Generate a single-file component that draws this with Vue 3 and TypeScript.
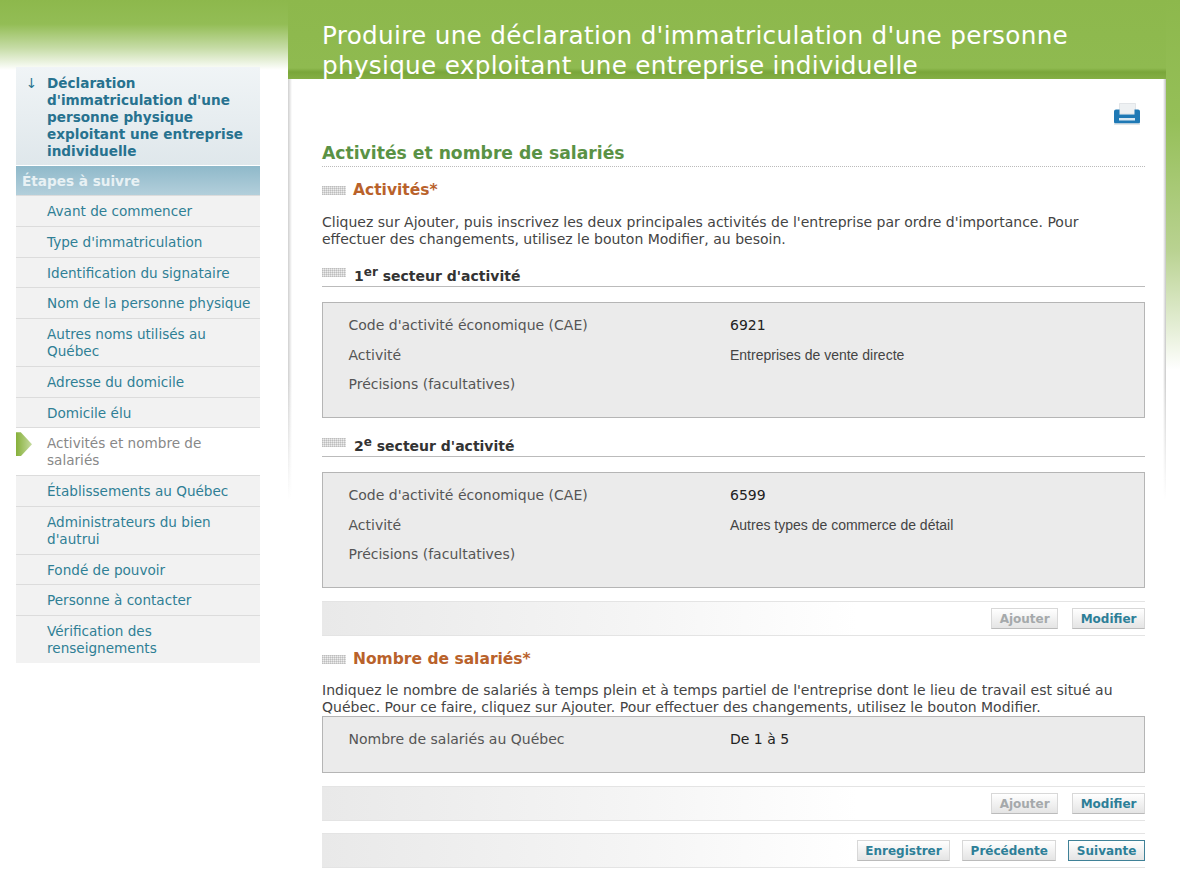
<script setup lang="ts">
interface Step { label: string; current?: boolean }
const steps: Step[] = [
  { label: "Avant de commencer" },
  { label: "Type d'immatriculation" },
  { label: "Identification du signataire" },
  { label: "Nom de la personne physique" },
  { label: "Autres noms utilisés au Québec" },
  { label: "Adresse du domicile" },
  { label: "Domicile élu" },
  { label: "Activités et nombre de salariés", current: true },
  { label: "Établissements au Québec" },
  { label: "Administrateurs du bien d'autrui" },
  { label: "Fondé de pouvoir" },
  { label: "Personne à contacter" },
  { label: "Vérification des renseignements" },
]
</script>

<template>
  <div class="page">
    <aside class="side">
      <nav class="nav">
        <div class="nav-top">
          <span class="arrow">↓</span>
          <span class="nav-title">Déclaration d'immatriculation d'une personne physique exploitant une entreprise individuelle</span>
        </div>
        <div class="nav-head">Étapes à suivre</div>
        <ul class="steps">
          <li v-for="s in steps" :key="s.label" class="step" :class="{ current: s.current }">
            <span v-if="s.current" class="marker"></span>
            {{ s.label }}
          </li>
        </ul>
      </nav>
    </aside>

    <div class="main">
      <header class="banner">
        <h1>Produire une déclaration d'immatriculation d'une personne physique exploitant une entreprise individuelle</h1>
      </header>
      <main class="panel">
        <div class="print-row">
          <svg class="printer" width="28" height="22" viewBox="0 0 28 22">
            <path d="M6.500 0.500 H22.500 V11 H6.500z" fill="#eef1f3" stroke="#d4d9dc" stroke-width="0.6" />
            <path d="M3 6.500 H6.500 V11.500 H21.500 V6.500 H25 a2 2 0 0 1 2 2 V19 a1.500 1.500 0 0 1-1.500 1.500 H2.500 A1.500 1.500 0 0 1 1 19 V8.500 a2 2 0 0 1 2-2z" fill="#1f79b5" />
            <rect x="6" y="15" width="16" height="2.500" fill="#d9e8f2" />
            <rect x="1" y="20.500" width="26" height="1.200" fill="#d5dcdf" />
          </svg>
        </div>
        <h2 class="page-title">Activités et nombre de salariés</h2>

        <h3 class="sec"><span class="dots"></span>Activités*</h3>
        <p class="intro first">Cliquez sur Ajouter, puis inscrivez les deux principales activités de l'entreprise par ordre d'importance. Pour effectuer des changements, utilisez le bouton Modifier, au besoin.</p>

        <h4 class="sub"><span class="dots"></span><span>1<sup>er</sup> secteur d'activité</span></h4>
        <div class="box tall">
          <div class="row"><span class="lbl">Code d'activité économique (CAE)</span><span class="val">6921</span></div>
          <div class="row"><span class="lbl">Activité</span><span class="val small">Entreprises de vente directe</span></div>
          <div class="row"><span class="lbl">Précisions (facultatives)</span></div>
        </div>

        <h4 class="sub"><span class="dots"></span><span>2<sup>e</sup> secteur d'activité</span></h4>
        <div class="box tall">
          <div class="row"><span class="lbl">Code d'activité économique (CAE)</span><span class="val">6599</span></div>
          <div class="row"><span class="lbl">Activité</span><span class="val small">Autres types de commerce de détail</span></div>
          <div class="row"><span class="lbl">Précisions (facultatives)</span></div>
        </div>

        <div class="bar">
          <button class="btn off">Ajouter</button>
          <button class="btn">Modifier</button>
        </div>

        <h3 class="sec count"><span class="dots"></span>Nombre de salariés*</h3>
        <p class="intro">Indiquez le nombre de salariés à temps plein et à temps partiel de l'entreprise dont le lieu de travail est situé au Québec. Pour ce faire, cliquez sur Ajouter. Pour effectuer des changements, utilisez le bouton Modifier.</p>
        <div class="box short">
          <div class="row"><span class="lbl">Nombre de salariés au Québec</span><span class="val">De 1 à 5</span></div>
        </div>

        <div class="bar">
          <button class="btn off">Ajouter</button>
          <button class="btn">Modifier</button>
        </div>
        <div class="bar third-bar">
          <button class="btn">Enregistrer</button>
          <button class="btn">Précédente</button>
          <button class="btn next">Suivante</button>
        </div>
      </main>
    </div>
  </div>
</template>

<style>
html, body { margin: 0; background: #fff; }
</style>

<style scoped>
.page {
  display: flex;
  height: 877px;
  overflow: hidden;
  font-family: "DejaVu Sans", Verdana, sans-serif;
  font-size: 14px;
  line-height: 17px;
  color: #444;
  background: linear-gradient(180deg, #8db84c 0, #93bd55 24px, #c6dca6 48px, #fff 70px, #fff 100%);
}
.side { width: 288px; flex: none; padding: 67px 0 0 16px; box-sizing: border-box; }
.nav { width: 244px; font-size: 13.6px; }
.nav-top {
  display: flex;
  height: 98px;
  box-sizing: border-box;
  padding-top: 8px;
  background: linear-gradient(180deg, #f0f4f6, #dfe7eb);
  color: #27728f;
  font-weight: 700;
}
.arrow { width: 31px; flex: none; text-align: center; font-weight: 400; }
.nav-title { flex: 1; }
.nav-head {
  height: 29px;
  margin-top: 1px;
  padding-left: 6px;
  line-height: 30px;
  font-weight: 700;
  color: #e8f1f4;
  background: linear-gradient(180deg, #8fb9ca, #b3cfdb);
}
.steps { list-style: none; margin: 0; padding: 0; }
.step {
  position: relative;
  padding: 7px 6px 5.75px 31px;
  background: #f2f2f2;
  color: #2f7f95;
  border-top: 1px solid #dcdcdc;
}
.step.current { background: #fff; color: #888; }
.marker {
  position: absolute;
  left: 0;
  top: 4px;
  width: 16px;
  height: 24px;
  background: linear-gradient(90deg, #86b03a, #c6dba0);
  clip-path: polygon(0 0, 30% 0, 100% 50%, 30% 100%, 0 100%);
}
.main {
  width: 892px;
  flex: none;
  padding-right: 14px;
  box-sizing: border-box;
  background: linear-gradient(180deg, #8db84c 0, #95bf58 120px, #b9d291 250px, #e6efd8 330px, #fff 370px);
}
.banner {
  height: 79px;
  box-sizing: border-box;
  padding: 21px 20px 0 34px;
  background: linear-gradient(180deg, #8db84c 0, #8fba50 68px, #7aa63a 72px, #84af44 79px);
  overflow: hidden;
}
h1 {
  margin: 0;
  font-size: 24.7px;
  line-height: 30px;
  font-weight: 400;
  color: #fff;
  letter-spacing: 0.3px;
}
.panel {
  height: 798px;
  padding: 0 21px 0 34px;
  box-sizing: border-box;
  background:
    linear-gradient(90deg, rgba(255, 255, 255, 0), #fff) left top / 4px 421px no-repeat,
    linear-gradient(180deg, #cfcfcf, #cfcfcf 300px, #fff) left top / 4px 421px no-repeat,
    linear-gradient(90deg, #fff, rgba(255, 255, 255, 0)) right top / 3px 421px no-repeat,
    linear-gradient(180deg, #bdbdbd, #c8c8c8 300px, #fff) right top / 3px 421px no-repeat,
    #fff;
}
.print-row { display: flex; justify-content: flex-end; height: 61px; padding-top: 24px; box-sizing: border-box; }
.printer { margin-right: 4px; }
.page-title {
  margin: 0;
  height: 26px;
  font-size: 17.2px;
  line-height: 27px;
  font-weight: 700;
  color: #5a9245;
  border-bottom: 1px dotted #bbb;
}
.sec {
  display: flex;
  align-items: center;
  margin: 14px 0 0;
  font-size: 15.5px;
  line-height: 18px;
  font-weight: 700;
  color: #b9622b;
}
.dots {
  width: 24px;
  height: 9px;
  margin-right: 7px;
  flex: none;
  background: repeating-linear-gradient(90deg, #dcdcdc 0 1px, #f6f6f6 1px 2px), repeating-linear-gradient(0deg, #dcdcdc 0 1px, #f6f6f6 1px 2px);
  background-blend-mode: multiply;
}
.intro { margin: 0; }
.intro.first { margin-top: 15px; }
.sub {
  display: flex;
  align-items: center;
  margin: 15px 0 0;
  height: 24px;
  padding-top: 3px;
  box-sizing: border-box;
  font-size: 14px;
  line-height: 17px;
  font-weight: 700;
  color: #333;
  border-bottom: 1px solid #bbb;
}
.sub .dots { position: relative; top: -4px; margin-right: 8px; }
sup { font-size: 12px; line-height: 0; vertical-align: 5px; }
.box {
  box-sizing: border-box;
  margin-top: 15px;
  padding: 8px 0 0 25.5px;
  background: #ebebeb;
  border: 1px solid #b5b5b5;
}
.box.tall { height: 116px; }
.box.short { height: 57px; margin-top: 0; padding-top: 14px; }
.row { display: flex; height: 29.5px; line-height: 29px; }
.short .row { height: 17px; line-height: 17px; }
.lbl { width: 381.5px; flex: none; color: #555; }
.val { color: #222; }
.val.small { font-family: "Liberation Sans", Arial, sans-serif; font-size: 14px; color: #444; }
.bar {
  display: flex;
  justify-content: flex-end;
  align-items: center;
  gap: 14px;
  height: 35px;
  margin-top: 13px;
  box-sizing: border-box;
  background: linear-gradient(90deg, #e9e9e9, #f4f4f4 35%, #fff 65%);
  border-top: 1px solid #e4e4e4;
  border-bottom: 1px solid #e4e4e4;
}
.third-bar { margin-top: 12px; gap: 12px; }
.count { margin-top: 14px; }
.count + .intro { margin-top: 14px; }
.btn {
  height: 21px;
  padding: 2px 7.5px 0;
  font-family: "DejaVu Sans", Verdana, sans-serif;
  font-size: 12px;
  font-weight: 700;
  line-height: 17px;
  color: #2d7f98;
  background: linear-gradient(180deg, #fff, #e4e4e4);
  border: 1px solid #d8d8d8;
  border-bottom-color: #bbb;
}
.btn.off { color: #a5a9ab; }
.btn.next { border-color: #3f8197; }
</style>
